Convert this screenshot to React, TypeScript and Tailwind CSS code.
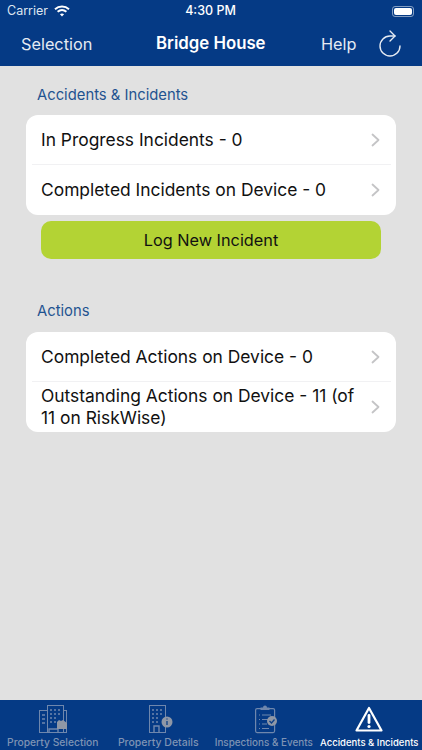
const font = "font-['Inter','Liberation_Sans',sans-serif]";

function Chevron() {
  return (
    <svg width="9" height="14" viewBox="0 0 9 14" fill="none" className="shrink-0">
      <path d="M1.500 1.500 7.500 7l-6 5.500" stroke="#c4c4c6" strokeWidth="1.800" strokeLinecap="round" strokeLinejoin="round" />
    </svg>
  );
}

function Row({ label, border = false, leading = "" }: { label: string; border?: boolean; leading?: string }) {
  return (
    <div className="relative flex h-[50px] items-center pl-[15px] pr-[16px]">
      <div className={`flex-1 pr-[8px] text-[17.4px] text-[#111] ${leading}`}>{label}</div>
      <Chevron />
      {border && <div className="absolute bottom-0 left-[6px] right-[5px] h-px bg-[#f1f1f3]" />}
    </div>
  );
}

function SectionTitle({ children }: { children: string }) {
  return <div className="pl-[37px] text-[14.8px] leading-5 text-[#1f5390]">{children}</div>;
}

function Wifi() {
  return (
    <svg width="16" height="12" viewBox="0 0 16 12" fill="none" stroke="white" strokeLinecap="butt">
      <path d="M1 4.200C5 .6 11 .6 15 4.200" strokeWidth="2" />
      <path d="M3.600 6.800c2.600-2.200 6.200-2.200 8.800 0" strokeWidth="2" />
      <path d="M8 11.500 5.900 9.200c1.200-1 3-1 4.200 0L8 11.500Z" fill="white" stroke="none" />
    </svg>
  );
}

function TabBuilding() {
  return (
    <svg width="30" height="30" viewBox="0 0 30 30" fill="none" stroke="#6f87ad" strokeWidth="1">
      <rect x="9.500" y="1.500" width="16" height="27" />
      <rect x="1.500" y="6.500" width="8" height="22" />
      <rect x="25.500" y="6.500" width="3" height="22" />
      <path d="M12 6h2M16 6h2M20 6h2M12 10h2M16 10h2M20 10h2M12 14h2M16 14h2M12 18h2M16 18h2M4 11h3M4 15h3M4 19h3M11 28v-3h9v3" strokeWidth="1.400" />
      <path d="M19 25v-7l2-2 2 1 2-1 4 3v6Z" fill="#8f97a6" stroke="none" />
    </svg>
  );
}

function TabDetails() {
  return (
    <svg width="30" height="30" viewBox="0 0 30 30" fill="none" stroke="#6f87ad" strokeWidth="1">
      <rect x="6.500" y="1.500" width="16" height="27" />
      <path d="M9 6h2M13 6h2M17 6h2M9 10h2M13 10h2M17 10h2M9 14h2M13 14h2M9 18h2M13 18h2M11 28v-6h5v6" strokeWidth="1.400" />
      <circle cx="24" cy="18" r="5.500" fill="#8f97a6" stroke="none" />
      <path d="M24 17v4M24 14.600v1" stroke="#0d3f86" strokeWidth="1.300" />
    </svg>
  );
}

function TabClipboard() {
  return (
    <svg width="30" height="30" viewBox="0 0 30 30" fill="none" stroke="#6f87ad" strokeWidth="1.200">
      <rect x="6.600" y="4.600" width="19" height="24" rx="1.500" />
      <path d="M11.500 6V3.500h2.500a2 2 0 0 1 4 0h2.500V6h-9Z" fill="#6f87ad" stroke="none" />
      <path d="M10 11h1M13 11h9M10 15.500h1M13 15.500h7M10 20h1M13 20h5M10 24.500h1M13 24.500h7" />
      <circle cx="23" cy="17" r="5" fill="#8f97a6" stroke="none" />
      <path d="m20.500 17 2 2 3-3.500" stroke="#0d3f86" strokeWidth="1.300" />
    </svg>
  );
}

function TabWarning() {
  return (
    <svg width="30" height="30" viewBox="0 0 30 30" fill="none">
      <path d="M15 4 27.500 26.500h-25L15 4Z" stroke="white" strokeWidth="2.200" strokeLinejoin="round" />
      <path d="M15 11.500v7" stroke="white" strokeWidth="2.800" strokeLinecap="round" />
      <circle cx="15" cy="22.500" r="1.600" fill="white" />
    </svg>
  );
}

function Tab({ label, active = false, size, icon }: { label: string; active?: boolean; size: string; icon: React.ReactNode }) {
  return (
    <div className="flex flex-col items-center pt-1">
      {icon}
      <div className={`mt-[2px] whitespace-nowrap leading-[13px] font-medium ${size} ${active ? "text-white" : "text-[#7e93b4]"}`}>{label}</div>
    </div>
  );
}

export default function App() {
  return (
    <div className={`flex h-[750px] w-[422px] flex-col overflow-hidden bg-[#e1e1e1] ${font}`}>
      {/* Header */}
      <div className="h-[66px] bg-[#053a85] text-white">
        <div className="flex h-[22px] items-center justify-between pl-[7px] pr-[8px] text-[12.5px]">
          <div className="flex w-[70px] items-center gap-[6px]">
            <span className="text-[#dfe6f0]">Carrier</span>
            <Wifi />
          </div>
          <span className="font-medium">4:30 PM</span>
          <div className="flex h-[12px] w-[70px] items-center justify-end">
            <div className="h-[11px] w-[22px] rounded-[3px] border border-white/50 p-px">
              <div className="h-full w-full rounded-[2px] bg-white" />
            </div>
          </div>
        </div>
        <div className="flex h-[44px] items-center pl-[21px] pr-[20px] text-[16.3px]">
          <span className="w-[72px] text-[#e6ebf3]">Selection</span>
          <span className="ml-[63px] w-[110px] text-[16.800px] font-semibold">Bridge House</span>
          <span className="ml-[55px] text-[#e6ebf3]">Help</span>
          <svg width="24" height="30" viewBox="0 0 24 30" fill="none" stroke="#e6ebf3" strokeWidth="1.400" strokeLinecap="round" strokeLinejoin="round" className="ml-auto">
            <path d="M17 7h-5A10 10 0 1 0 22 17" />
            <path d="M12 2l5 5-5 5" />
          </svg>
        </div>
      </div>

      {/* Content */}
      <div className="flex-1 pt-[19px]">
        <SectionTitle>Accidents &amp; Incidents</SectionTitle>
        <div className="mx-[26px] mt-[10px] overflow-hidden rounded-[12px] bg-white">
          <Row label="In Progress Incidents - 0" border />
          <Row label="Completed Incidents on Device - 0" />
        </div>
        <div className="mx-[41px] mt-[6px] flex h-[38px] items-center justify-center rounded-[10px] bg-[#b3d334] text-[16.300px] text-[#111]">
          Log New Incident
        </div>

        <div className="mt-[42px]">
          <SectionTitle>Actions</SectionTitle>
        </div>
        <div className="mx-[26px] mt-[11px] overflow-hidden rounded-[12px] bg-white">
          <Row label="Completed Actions on Device - 0" border />
          <Row label="Outstanding Actions on Device - 11 (of 11 on RiskWise)" leading="leading-[22px]" />
        </div>
      </div>

      {/* Tab bar */}
      <div className="grid h-[50px] grid-cols-4 bg-[#053a85]">
        <Tab label="Property Selection" size="text-[10.300px]" icon={<TabBuilding />} />
        <Tab label="Property Details" size="text-[10.500px]" icon={<TabDetails />} />
        <Tab label="Inspections & Events" size="text-[9.900px]" icon={<TabClipboard />} />
        <Tab label="Accidents & Incidents" size="text-[9.500px]" active icon={<TabWarning />} />
      </div>
    </div>
  );
}
